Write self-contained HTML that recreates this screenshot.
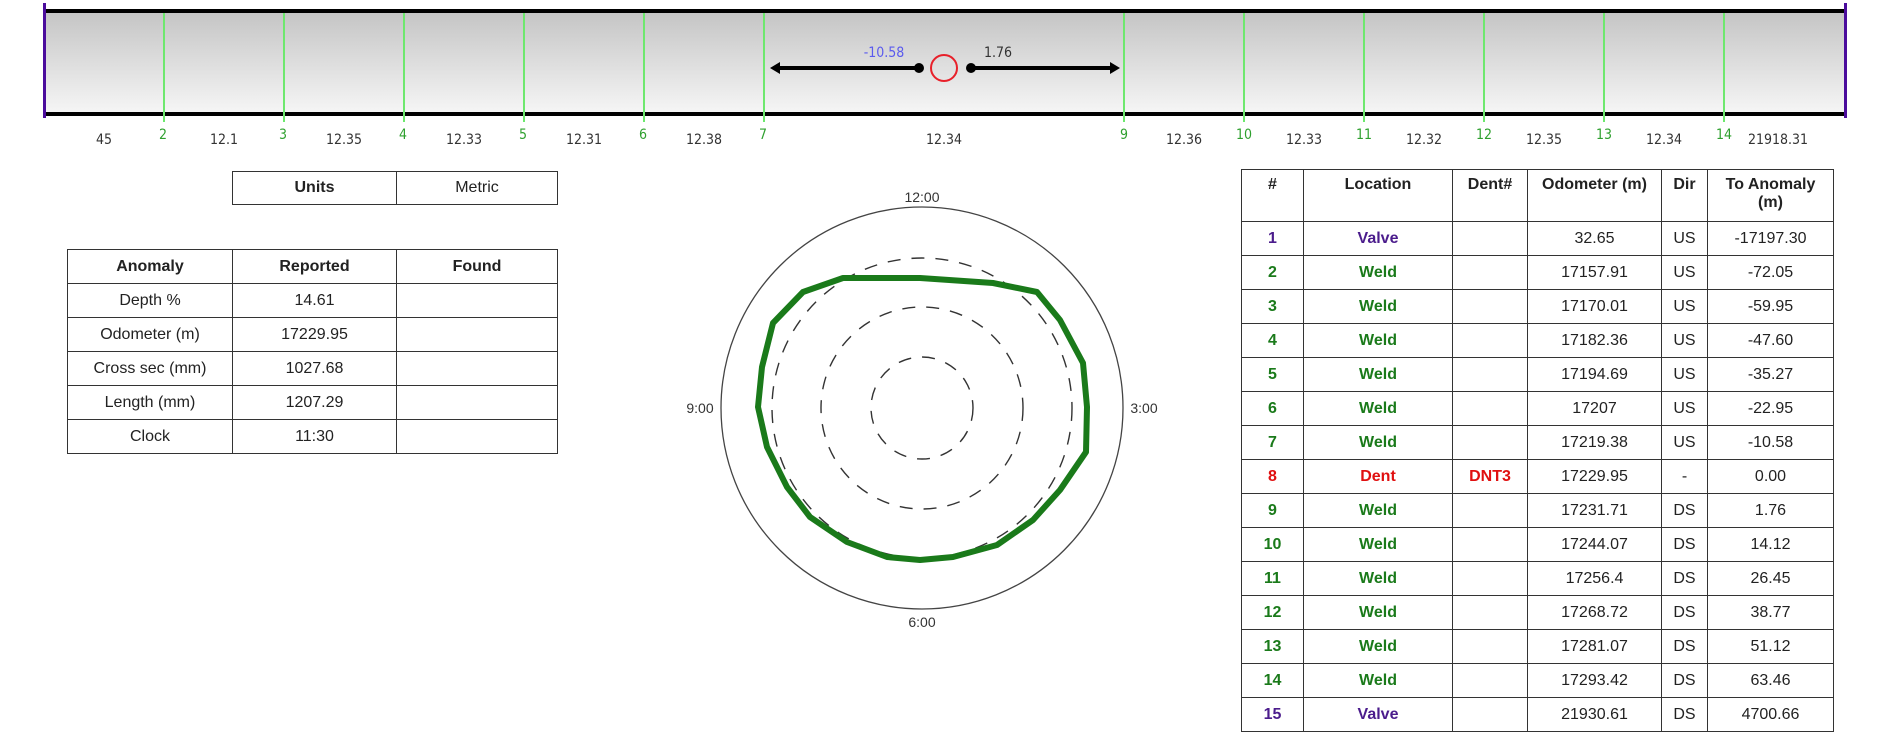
<!DOCTYPE html>
<html><head><meta charset="utf-8"><style>
body{margin:0;width:1883px;height:744px;background:#fff;overflow:hidden;position:relative;font-family:"Liberation Sans",Arial,sans-serif;}
svg{position:absolute;left:0;top:0}
table{position:absolute;border-collapse:collapse;font-size:16px;color:#222}
td{border:1.5px solid #333;text-align:center;padding:0;}
.b{font-weight:bold}
.g{color:#1a7a1a;font-weight:bold}.p{color:#4b1c8c;font-weight:bold}.r{color:#e01010;font-weight:bold}
</style></head><body>
<svg width="1883" height="744">
<defs><linearGradient id="pg" x1="0" y1="0" x2="0" y2="1"><stop offset="0" stop-color="#c4c4c4"/><stop offset="1" stop-color="#f6f6f6"/></linearGradient></defs>
<rect x="45" y="11" width="1801" height="103" fill="url(#pg)"/>
<rect x="45" y="9" width="1801" height="4" fill="#000"/>
<rect x="45" y="112" width="1801" height="4" fill="#000"/>
<rect x="43" y="3" width="3" height="115" fill="#4b0c9c"/>
<rect x="1844" y="3" width="3" height="115" fill="#4b0c9c"/>
<g stroke="#6ee86e" stroke-width="2">
<line x1="164" y1="13" x2="164" y2="122"/><line x1="284" y1="13" x2="284" y2="122"/><line x1="404" y1="13" x2="404" y2="122"/><line x1="524" y1="13" x2="524" y2="122"/><line x1="644" y1="13" x2="644" y2="122"/><line x1="764" y1="13" x2="764" y2="122"/>
<line x1="1124" y1="13" x2="1124" y2="122"/><line x1="1244" y1="13" x2="1244" y2="122"/><line x1="1364" y1="13" x2="1364" y2="122"/><line x1="1484" y1="13" x2="1484" y2="122"/><line x1="1604" y1="13" x2="1604" y2="122"/><line x1="1724" y1="13" x2="1724" y2="122"/>
</g>
<g font-family="DejaVu Sans Condensed, DejaVu Sans, sans-serif" font-size="14" text-anchor="middle" fill="#2fa02f">
<text x="163" y="139">2</text><text x="283" y="139">3</text><text x="403" y="139">4</text><text x="523" y="139">5</text><text x="643" y="139">6</text><text x="763" y="139">7</text>
<text x="1124" y="139">9</text><text x="1244" y="139">10</text><text x="1364" y="139">11</text><text x="1484" y="139">12</text><text x="1604" y="139">13</text><text x="1724" y="139">14</text>
</g>
<g font-family="DejaVu Sans Condensed, DejaVu Sans, sans-serif" font-size="14" text-anchor="middle" fill="#333">
<text x="104" y="144">45</text><text x="224" y="144">12.1</text><text x="344" y="144">12.35</text><text x="464" y="144">12.33</text><text x="584" y="144">12.31</text><text x="704" y="144">12.38</text>
<text x="944" y="144">12.34</text><text x="1184" y="144">12.36</text><text x="1304" y="144">12.33</text><text x="1424" y="144">12.32</text><text x="1544" y="144">12.35</text><text x="1664" y="144">12.34</text><text x="1778" y="144">21918.31</text>
</g>
<g stroke="#000" stroke-width="4"><line x1="778" y1="68" x2="918" y2="68"/><line x1="972" y1="68" x2="1110" y2="68"/></g>
<polygon points="770,68 780,62 780,74" fill="#000"/><polygon points="1120,68 1110,62 1110,74" fill="#000"/>
<circle cx="919" cy="68" r="5" fill="#000"/><circle cx="971" cy="68" r="5" fill="#000"/>
<circle cx="944" cy="68" r="13" fill="none" stroke="#e8202a" stroke-width="2"/>
<g font-family="DejaVu Sans Condensed, DejaVu Sans, sans-serif" font-size="14" text-anchor="middle"><text x="884" y="57" fill="#5a5aee">-10.58</text><text x="998" y="57" fill="#333">1.76</text></g>
<circle cx="922" cy="408" r="201" fill="none" stroke="#444" stroke-width="1.3"/>
<g fill="none" stroke="#333" stroke-width="1.4" stroke-dasharray="13,11"><circle cx="922" cy="408" r="150"/><circle cx="922" cy="408" r="101"/><circle cx="922" cy="408" r="51"/></g>
<polygon fill="none" stroke="#1a7a1a" stroke-width="6" stroke-linejoin="round" points="843,278 920,278 993,283 1037,292 1060,320 1083,363 1087,407 1086,452 1060,490 1033,520 997,545 953,557 920,560 887,557 847,542 810,517 787,487 767,447 758,407 762,367 773,323 803,292"/>
<g font-family="Liberation Sans, sans-serif" font-size="14" fill="#333" text-anchor="middle"><rect x="898" y="187" width="48" height="16" fill="#fff"/><text x="922" y="202">12:00</text><rect x="902" y="612" width="40" height="16" fill="#fff"/><text x="922" y="627">6:00</text><text x="700" y="413">9:00</text><text x="1144" y="413">3:00</text></g>
</svg>
<table style="left:232px;top:171px;width:326px;height:34px"><tr><td class="b" style="width:163px">Units</td><td>Metric</td></tr></table>
<table style="left:67px;top:249px;width:491px;">
<tr style="height:34px"><td class="b" style="width:164px">Anomaly</td><td class="b" style="width:163px">Reported</td><td class="b">Found</td></tr>
<tr style="height:34px"><td>Depth %</td><td>14.61</td><td></td></tr>
<tr style="height:34px"><td>Odometer (m)</td><td>17229.95</td><td></td></tr>
<tr style="height:34px"><td>Cross sec (mm)</td><td>1027.68</td><td></td></tr>
<tr style="height:34px"><td>Length (mm)</td><td>1207.29</td><td></td></tr>
<tr style="height:34px"><td>Clock</td><td>11:30</td><td></td></tr>
</table>
<table style="left:1241px;top:169px;width:593px;">
<tr style="height:52px;vertical-align:top"><td class="b" style="width:61px;padding-top:6px">#</td><td class="b" style="width:148px;padding-top:6px">Location</td><td class="b" style="width:74px;padding-top:6px">Dent#</td><td class="b" style="width:133px;padding-top:6px">Odometer (m)</td><td class="b" style="width:45px;padding-top:6px">Dir</td><td class="b" style="padding-top:6px">To Anomaly<br>(m)</td></tr>
<tr style="height:34px"><td class="p">1</td><td class="p">Valve</td><td></td><td>32.65</td><td>US</td><td>-17197.30</td></tr>
<tr style="height:34px"><td class="g">2</td><td class="g">Weld</td><td></td><td>17157.91</td><td>US</td><td>-72.05</td></tr>
<tr style="height:34px"><td class="g">3</td><td class="g">Weld</td><td></td><td>17170.01</td><td>US</td><td>-59.95</td></tr>
<tr style="height:34px"><td class="g">4</td><td class="g">Weld</td><td></td><td>17182.36</td><td>US</td><td>-47.60</td></tr>
<tr style="height:34px"><td class="g">5</td><td class="g">Weld</td><td></td><td>17194.69</td><td>US</td><td>-35.27</td></tr>
<tr style="height:34px"><td class="g">6</td><td class="g">Weld</td><td></td><td>17207</td><td>US</td><td>-22.95</td></tr>
<tr style="height:34px"><td class="g">7</td><td class="g">Weld</td><td></td><td>17219.38</td><td>US</td><td>-10.58</td></tr>
<tr style="height:34px"><td class="r">8</td><td class="r">Dent</td><td class="r">DNT3</td><td>17229.95</td><td>-</td><td>0.00</td></tr>
<tr style="height:34px"><td class="g">9</td><td class="g">Weld</td><td></td><td>17231.71</td><td>DS</td><td>1.76</td></tr>
<tr style="height:34px"><td class="g">10</td><td class="g">Weld</td><td></td><td>17244.07</td><td>DS</td><td>14.12</td></tr>
<tr style="height:34px"><td class="g">11</td><td class="g">Weld</td><td></td><td>17256.4</td><td>DS</td><td>26.45</td></tr>
<tr style="height:34px"><td class="g">12</td><td class="g">Weld</td><td></td><td>17268.72</td><td>DS</td><td>38.77</td></tr>
<tr style="height:34px"><td class="g">13</td><td class="g">Weld</td><td></td><td>17281.07</td><td>DS</td><td>51.12</td></tr>
<tr style="height:34px"><td class="g">14</td><td class="g">Weld</td><td></td><td>17293.42</td><td>DS</td><td>63.46</td></tr>
<tr style="height:34px"><td class="p">15</td><td class="p">Valve</td><td></td><td>21930.61</td><td>DS</td><td>4700.66</td></tr>
</table>
</body></html>
